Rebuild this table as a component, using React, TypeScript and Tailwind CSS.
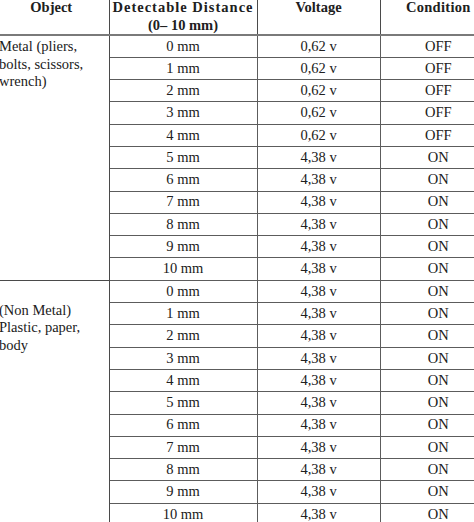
import React from 'react';

interface Reading {
  distance: string;
  voltage: string;
  condition: string;
}

const metalReadings: Reading[] = Array.from({ length: 11 }, (_, i) => ({
  distance: `${i} mm`,
  voltage: i < 5 ? '0,62 v' : '4,38 v',
  condition: i < 5 ? 'OFF' : 'ON',
}));

const nonMetalReadings: Reading[] = Array.from({ length: 11 }, (_, i) => ({
  distance: `${i} mm`,
  voltage: '4,38 v',
  condition: 'ON',
}));

const groups = [
  { label: ['Metal (pliers,', 'bolts, scissors,', 'wrench)'], pad: 'pt-[2px]', rows: metalReadings },
  { label: ['(Non Metal)', 'Plastic, paper,', 'body'], pad: 'pt-[21px]', rows: nonMetalReadings },
];

export default function App() {
  return (
    <div className="w-[474px] h-[522px] overflow-hidden bg-white">
      <table className="table-fixed border-collapse -ml-[6px] -mt-[3px] w-[512px] text-[14.5px] leading-[17.5px] text-[#202020] font-['Liberation_Serif',serif]">
        <colgroup>
          <col className="w-[115px]" />
          <col className="w-[148px]" />
          <col className="w-[123px]" />
          <col className="w-[126px]" />
        </colgroup>
        <thead>
          <tr className="h-[37px] border-b-2 border-[#7a7a7a]">
            <th className="align-top pt-[1px] font-bold leading-[18px] border-r border-[#4a4a4a]">Object</th>
            <th className="align-top pt-[1px] font-bold leading-[18px] border-r border-[#4a4a4a] whitespace-nowrap">
              <span className="tracking-[1px]">Detectable Distance</span>
              <br />
              (0– 10 mm)
            </th>
            <th className="align-top pt-[1px] font-bold leading-[18px] border-r border-[#4a4a4a]">Voltage</th>
            <th className="align-top pt-[1px] pr-[10px] font-bold leading-[18px] tracking-[0.3px]">Condition</th>
          </tr>
        </thead>
        <tbody>
          {groups.map((group) =>
            group.rows.map((row, i) => (
              <tr key={`${group.label[0]}-${row.distance}`} className="h-[22.3px]">
                {i === 0 && (
                  <td
                    rowSpan={group.rows.length}
                    className={`align-top pl-[5px] text-left whitespace-nowrap border-r border-b border-[#4a4a4a] ${group.pad}`}
                  >
                    {group.label.map((line) => (
                      <div key={line}>{line}</div>
                    ))}
                  </td>
                )}
                <td className="text-center border-r border-b border-[#5c5c5c] p-0">{row.distance}</td>
                <td className="text-center border-r border-b border-[#5c5c5c] p-0">{row.voltage}</td>
                <td className="text-center border-b border-[#5c5c5c] p-0 pr-[10px]">{row.condition}</td>
              </tr>
            )),
          )}
        </tbody>
      </table>
    </div>
  );
}
